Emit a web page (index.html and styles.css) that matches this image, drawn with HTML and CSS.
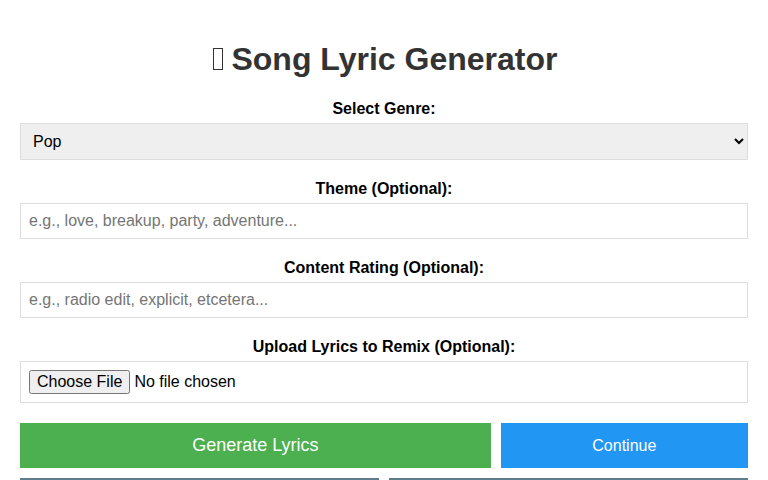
FILE: index.html
```html
<!DOCTYPE html>
<html lang="en">
<head>
  <meta charset="UTF-8">
  <meta name="viewport" content="width=device-width, initial-scale=1.0">
  <title>Song Lyric Generator</title>
  <link rel="stylesheet" href="styles.css">
</head>
<body>
  <h1><span class="title-icon"></span> Song Lyric Generator</h1>

  <div class="field">
    <label for="genre">Select Genre:</label>
    <select id="genre">
      <option value="pop">Pop</option>
      <option value="rock">Rock</option>
      <option value="rap">Rap</option>
      <option value="country">Country</option>
    </select>
  </div>

  <div class="field">
    <label for="theme">Theme (Optional):</label>
    <input type="text" id="theme" placeholder="e.g., love, breakup, party, adventure...">
  </div>

  <div class="field">
    <label for="rating">Content Rating (Optional):</label>
    <input type="text" id="rating" placeholder="e.g., radio edit, explicit, etcetera...">
  </div>

  <div class="field">
    <label for="upload">Upload Lyrics to Remix (Optional):</label>
    <input type="file" id="upload" accept=".txt">
  </div>

  <div class="button-row">
    <button class="generate-btn">Generate Lyrics</button>
    <button class="continue-btn">Continue</button>
  </div>

  <div class="button-row">
    <button class="tool-btn">Copy</button>
    <button class="tool-btn">Download</button>
  </div>
</body>
</html>
```

FILE: styles.css
```css
* {
  box-sizing: border-box;
}

body {
  font-family: Arial, "Liberation Sans", sans-serif;
  max-width: 800px;
  margin: 0 auto;
  padding: 40px 20px 20px;
  text-align: center;
  background: #fff;
}

h1 {
  margin: 0 0 22px;
  line-height: 38px;
  color: #333;
}

.title-icon {
  display: inline-block;
  width: 10px;
  height: 22px;
  margin-left: 2px;
  border: 1px solid #333;
}

.field {
  margin-bottom: 20px;
}

label {
  display: block;
  margin-bottom: 5px;
  font-weight: bold;
}

input,
select {
  display: block;
  width: 100%;
  padding: 8px;
  border: 1px solid #ddd;
  font-family: inherit;
  font-size: 16px;
}

.button-row {
  display: flex;
  gap: 10px;
  margin-bottom: 10px;
}

button {
  padding: 12px;
  border: none;
  color: white;
  font-family: inherit;
  font-size: 16px;
  cursor: pointer;
}

.generate-btn {
  flex: 2;
  background: #4caf50;
  font-size: 18px;
}

.continue-btn {
  flex: 1;
  background: #2196f3;
}

.tool-btn {
  flex: 1;
  background: #607d8b;
}
```
